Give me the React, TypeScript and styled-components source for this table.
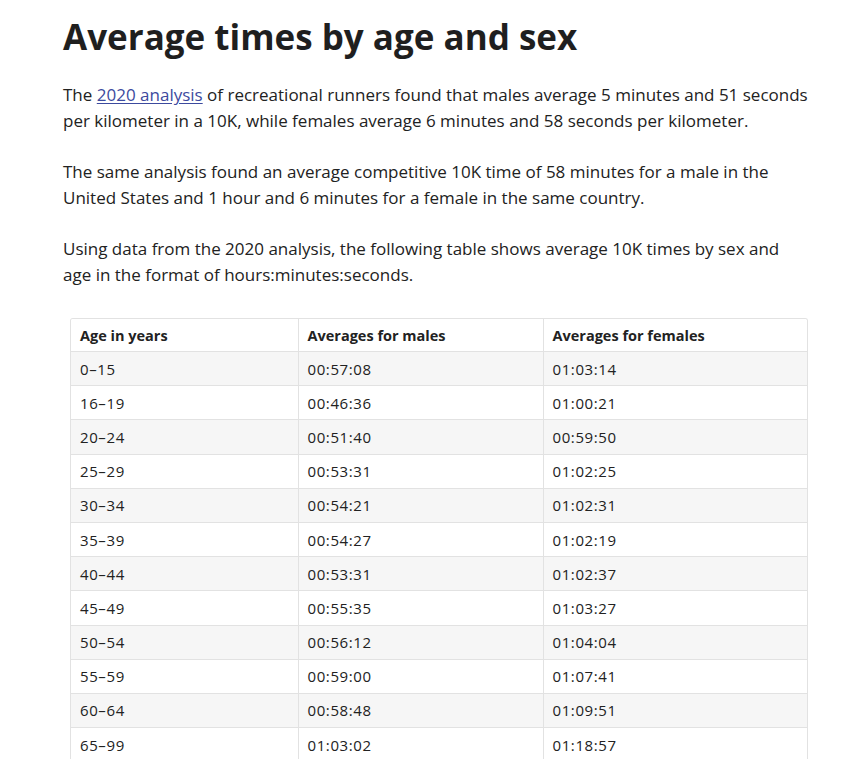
import React from "react";
import styled, { createGlobalStyle } from "styled-components";

const Global = createGlobalStyle`
  html, body { margin: 0; padding: 0; background: #fff; }
  body { font-family: "Open Sans", "Noto Sans", sans-serif; color: #222; }
`;

const Article = styled.article`
  width: 745px;
  padding: 14px 0 0 63px;
`;

const Title = styled.h2`
  margin: 0 0 22px 0;
  font-size: 35px;
  line-height: 46px;
  font-weight: 700;
  color: #1f1f1f;
`;

const Para = styled.p`
  margin: 0 0 25px 0;
  font-size: 17px;
  line-height: 26px;
  color: #222;
`;

const Link = styled.a`
  color: #3c4a9e;
  text-decoration: underline;
  text-underline-offset: 2px;
`;

const TableWrap = styled.div`
  margin: 30px 0 0 7px;
  border: 1px solid #e2e2e2;
  border-bottom: none;
  border-radius: 3px 3px 0 0;
  overflow: hidden;
`;

const Table = styled.table`
  width: 100%;
  border-collapse: collapse;
  font-size: 14.5px;
  color: #222;
`;

const Row = styled.tr<{ $shade?: boolean }>`
  background: ${(p) => (p.$shade ? "#f6f6f6" : "#fff")};
  border-bottom: 1px solid #e2e2e2;
`;

const Cell = styled.td`
  height: 33.2px;
  padding: 0 9px;
  font-size: 15px;
  letter-spacing: 0.6px;
  border-right: 1px solid #e2e2e2;
  vertical-align: middle;
  &:last-child { border-right: none; }
`;

const Head = styled.th`
  height: 32px;
  padding: 0 9px;
  text-align: left;
  font-weight: 700;
  border-right: 1px solid #e2e2e2;
  &:last-child { border-right: none; }
`;

const rows: [string, string, string][] = [
  ["0–15", "00:57:08", "01:03:14"],
  ["16–19", "00:46:36", "01:00:21"],
  ["20–24", "00:51:40", "00:59:50"],
  ["25–29", "00:53:31", "01:02:25"],
  ["30–34", "00:54:21", "01:02:31"],
  ["35–39", "00:54:27", "01:02:19"],
  ["40–44", "00:53:31", "01:02:37"],
  ["45–49", "00:55:35", "01:03:27"],
  ["50–54", "00:56:12", "01:04:04"],
  ["55–59", "00:59:00", "01:07:41"],
  ["60–64", "00:58:48", "01:09:51"],
  ["65–99", "01:03:02", "01:18:57"],
];

export default function App() {
  return (
    <>
      <Global />
      <Article>
        <Title>Average times by age and sex</Title>
        <Para>
          The <Link href="#">2020 analysis</Link> of recreational runners found that males average 5 minutes and 51 seconds per kilometer in a 10K, while females average 6 minutes and 58 seconds per kilometer.
        </Para>
        <Para>
          The same analysis found an average competitive 10K time of 58 minutes for a male in the United States and 1 hour and 6 minutes for a female in the same country.
        </Para>
        <Para>
          Using data from the 2020 analysis, the following table shows average 10K times by sex and age in the format of hours:minutes:seconds.
        </Para>
        <TableWrap>
          <Table>
            <colgroup>
              <col style={{ width: 227 }} />
              <col style={{ width: 245 }} />
              <col />
            </colgroup>
            <thead>
              <Row>
                <Head>Age in years</Head>
                <Head>Averages for males</Head>
                <Head>Averages for females</Head>
              </Row>
            </thead>
            <tbody>
              {rows.map((r, i) => (
                <Row key={r[0]} $shade={i % 2 === 0}>
                  <Cell>{r[0]}</Cell>
                  <Cell>{r[1]}</Cell>
                  <Cell>{r[2]}</Cell>
                </Row>
              ))}
            </tbody>
          </Table>
        </TableWrap>
      </Article>
    </>
  );
}
